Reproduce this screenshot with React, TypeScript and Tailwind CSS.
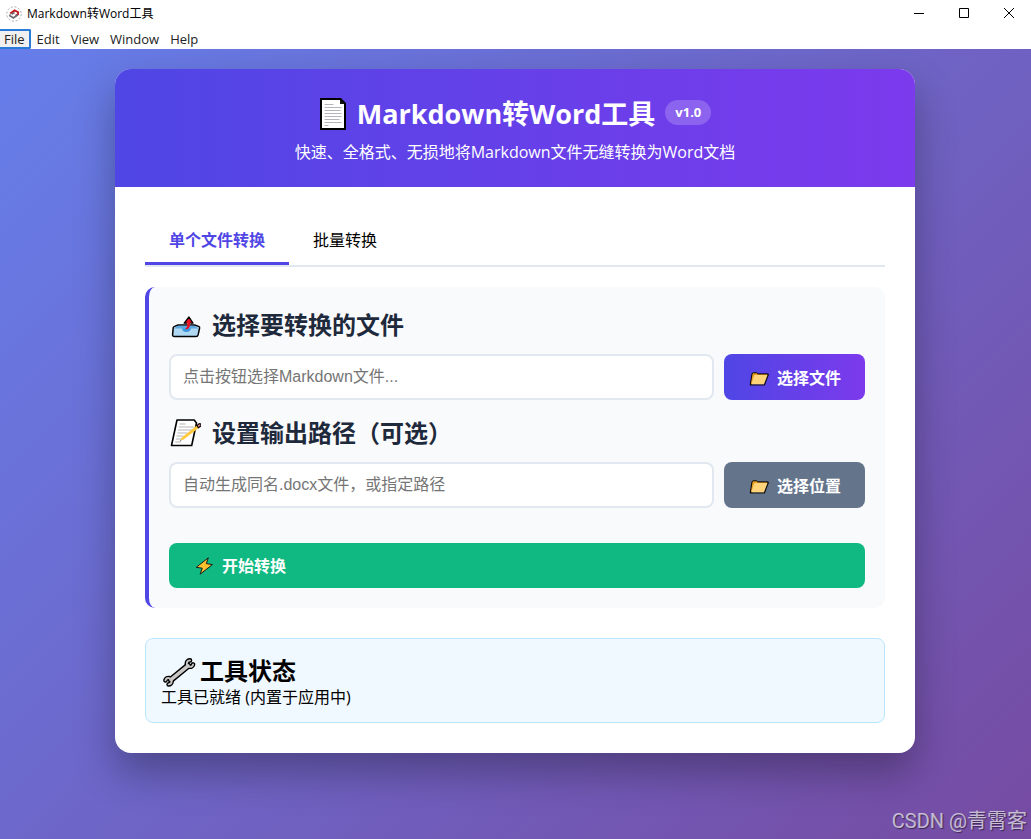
import { useState } from "react";
import type { ReactNode } from "react";

function AppLogo() {
  return (
    <svg className="size-4" viewBox="0 0 16 16" fill="none" aria-hidden="true">
      <circle cx="8" cy="8" r="7.2" stroke="#a8a8a8" strokeDasharray="2 1.8" />
      <path d="M4.2 7.6 8.6 4.4l3.6 1.8-.2 2.2-2.4 1.2" stroke="#c4161c" strokeWidth="1.8" />
      <path d="M4 8.6v1.2l3.4 2.2 4.4-3.2M5.6 8.2l3-1.8" stroke="#6b6b74" strokeWidth="1.7" />
    </svg>
  );
}

function PageIcon() {
  return (
    <svg className="h-8 w-7 shrink-0" viewBox="0 0 28 32" aria-hidden="true">
      <path d="M2 1h19.5L26 5.5V31H2z" fill="#fff" stroke="#000" strokeWidth="2" />
      <path d="m21 1 5 5h-5z" fill="#111" />
      <path d="M5.5 6.5h9M5.5 9.5h17M5.5 12.5h16M5.5 15.5h17M5.5 18.5h17M5.5 21.5h15M5.5 24.5h17M5.5 27.5h4" stroke="#b4b4ba" strokeWidth="1" />
    </svg>
  );
}

function OutboxIcon() {
  return (
    <svg className="size-8 shrink-0" viewBox="0 0 32 32" aria-hidden="true">
      <path d="M4.2 18.7q.3-.9 1.4-1.3L9 16h16.5l4.2 1.4q1.2.5.9 1.7l-1.5 6.8q-.4 1.6-2 1.6H5.4q-2 0-1.8-1.8z" fill="#b1d8f3" stroke="#000" strokeWidth="1.5" strokeLinejoin="round" />
      <path d="M5 19.4 9 16.8h16.2l4.6 2.6h-8q-1 3.4-4.8 3.4t-4.2-3.4z" fill="#5aa9e3" />
      <path d="M14 19.4h8q-1 3.4-4.6 3.4T14 19.4z" fill="#3a96dd" />
      <path d="M16.2 20q2.4-2 2.2-5.8h-3.2l4.8-6.2 4 6.2h-2.8q.2 4.4-3 6z" fill="#e81224" />
      <path d="M18 14.2h-2.8L20 8l4 6.2h-2.6" fill="none" stroke="#000" strokeWidth="1.3" strokeLinejoin="round" />
    </svg>
  );
}

function MemoIcon() {
  return (
    <svg className="size-8 shrink-0" viewBox="0 0 32 32" aria-hidden="true">
      <path d="M8 3h17.2l2.3 3-4.8 22.5H2.5z" fill="#fff" stroke="#000" strokeWidth="1.6" strokeLinejoin="round" />
      <path d="M10.5 7h6M9.7 10h15M9 13h14M8.3 16h10M7.5 19h7M6.9 22h6M6.2 25h6" stroke="#b5b5b5" strokeWidth="1.1" />
      <path d="m11.4 23.6 1.4-3.2L28.4 8l2 2.6-15.8 12z" fill="#ffc83d" />
      <path d="m27.8 8.6 1.9-1.6q1.4-.8 2.1.2.7 1.1-.3 2.1l-2.1 1.5z" fill="#d98484" stroke="#000" strokeWidth="1.1" />
      <path d="m10.8 24.2.8-1.5.8.9z" fill="#555" />
    </svg>
  );
}

function FolderIcon() {
  return (
    <svg className="h-5 w-[22px] shrink-0" viewBox="0 0 22 20" aria-hidden="true">
      <path d="M2.2 17 4 6q.2-1.2 1.4-1.2h3.2l1.2 1.1h10.4l-.5 2z" fill="#e8a023" stroke="#000" strokeWidth="1" strokeLinejoin="round" />
      <path d="M3.2 16.4 6.4 6.9h13.4L16 16.4z" fill="#ffd37a" />
      <path d="M2.2 17h14.2l4-10.6" fill="none" stroke="#111" strokeWidth="1.2" strokeLinejoin="round" />
    </svg>
  );
}

function BoltIcon() {
  return (
    <svg className="h-5 w-[22px] shrink-0" viewBox="0 0 22 20" aria-hidden="true">
      <path d="M15.3 1.8 3.3 11.3l6 .9-2.2 6L19.4 8.6l-6.1-1z" fill="#ffc22e" stroke="#1a1a1a" strokeWidth="1" strokeLinejoin="round" />
    </svg>
  );
}

function WrenchIcon() {
  const lowerHead = "M4.4 27.4a3.2 3.2 0 1 1 3.2 4";
  const upperHead = "M29 7.4a3.2 3.2 0 1 0 3.1 4";
  const shaft = "M10 26.7 27 12.8";
  return (
    <svg className="size-9 shrink-0" viewBox="0 0 36 36" fill="none" strokeLinecap="round" aria-hidden="true">
      <g stroke="#000" strokeWidth="4.6">
        <path d={lowerHead} />
        <path d={upperHead} />
        <path d={shaft} strokeWidth="6.4" />
      </g>
      <g stroke="#c9c6c6" strokeWidth="1.8">
        <path d={lowerHead} />
        <path d={upperHead} />
        <path d={shaft} strokeWidth="3.6" />
      </g>
    </svg>
  );
}

function WindowButton({ label, children }: { label: string; children: ReactNode }) {
  return (
    <button type="button" aria-label={label} className="flex h-[26px] w-[45px] items-center justify-center text-black">
      <svg className="size-3" viewBox="0 0 12 12" fill="none" stroke="currentColor" aria-hidden="true">
        {children}
      </svg>
    </button>
  );
}

const menus = ["File", "Edit", "View", "Window", "Help"];

function WindowChrome() {
  return (
    <header className="bg-white font-['Open_Sans','Noto_Sans_CJK_SC',sans-serif] text-black">
      <div className="flex h-7 items-start justify-between">
        <div className="flex h-7 items-center gap-[5px] pl-1.5 text-xs">
          <AppLogo />
          <span>Markdown转Word工具</span>
        </div>
        <div className="flex">
          <WindowButton label="Minimize">
            <path d="M1 6.5h10" />
          </WindowButton>
          <WindowButton label="Maximize">
            <path d="M1.5 1.5h9v9h-9z" />
          </WindowButton>
          <WindowButton label="Close">
            <path d="m1 1 10 10M11 1 1 11" />
          </WindowButton>
        </div>
      </div>
      <nav className="flex h-[21px] items-end gap-px text-[13px] text-[#222]">
        {menus.map((name) => (
          <button
            key={name}
            type="button"
            className={
              name === "File"
                ? "h-5 rounded-r-xs border-2 border-l-0 border-[#2a7bd8] bg-[#f0f0f0] px-1 leading-4"
                : "h-5 px-[5px] leading-5"
            }
          >
            {name}
          </button>
        ))}
      </nav>
    </header>
  );
}

interface FileFieldProps {
  id: string;
  title: string;
  icon: ReactNode;
  placeholder: string;
  button: string;
  buttonClass: string;
}

function FileField({ id, title, icon, placeholder, button, buttonClass }: FileFieldProps) {
  return (
    <div className="mb-[15px]">
      <h2 className="mb-[11px] text-2xl leading-9 font-bold text-[#1e293b]">
        <label htmlFor={id} className="flex items-center gap-[11px]">
          {icon}
          {title}
        </label>
      </h2>
      <div className="flex gap-2.5">
        <input
          id={id}
          readOnly
          placeholder={placeholder}
          className="h-[46px] min-w-0 flex-1 rounded-lg border-2 border-[#e2e8f0] bg-white px-3 font-['Liberation_Sans','Noto_Sans_CJK_SC',sans-serif] text-base placeholder:text-[#757575]"
        />
        <button
          type="button"
          className={`flex h-[46px] items-center gap-[7px] rounded-lg px-6 pt-0.5 text-base font-bold text-white ${buttonClass}`}
        >
          <FolderIcon />
          {button}
        </button>
      </div>
    </div>
  );
}

export default function App() {
  const [tab, setTab] = useState("single");
  const tabs = [
    { id: "single", label: "单个文件转换" },
    { id: "batch", label: "批量转换" },
  ];

  return (
    <div className="relative flex min-h-screen flex-col font-['Open_Sans','Noto_Sans_CJK_SC',sans-serif] text-black">
      <WindowChrome />
      <main className="flex-1 bg-linear-[135deg,#667eea_0%,#764ba2_100%] py-5 pr-[21px] pl-5">
        <div className="mx-auto max-w-[800px] overflow-hidden rounded-2xl bg-white shadow-[0_20px_40px_rgba(0,0,0,0.3)]">
          <div className="bg-linear-[90deg,#4f46e5,#7c3aed] px-5 pt-[25px] pb-[23px] text-center text-white">
            <h1 className="flex h-10 items-center justify-center gap-2.5 text-[27px] font-bold">
              <PageIcon />
              <span>Markdown转Word工具</span>
              <span className="mb-1 rounded-full bg-white/20 px-2.5 text-[13px] leading-[25px]">v1.0</span>
            </h1>
            <p className="mt-1.5 text-base leading-6">快速、全格式、无损地将Markdown文件无缝转换为Word文档</p>
          </div>

          <div className="p-[30px]">
            <div role="tablist" className="mb-5 flex border-b-2 border-[#e2e8f0]">
              {tabs.map(({ id, label }) => (
                <button
                  key={id}
                  type="button"
                  role="tab"
                  aria-selected={tab === id}
                  onClick={() => setTab(id)}
                  className={
                    tab === id
                      ? "h-12 border-b-3 border-[#4f46e5] px-6 text-base font-bold text-[#4f46e5]"
                      : "h-12 border-b-3 border-transparent px-6 text-base"
                  }
                >
                  {label}
                </button>
              ))}
            </div>

            <section className="mb-[30px] rounded-[10px] border-l-4 border-[#4f46e5] bg-[#f8fafc] p-5">
              <FileField
                id="source"
                title="选择要转换的文件"
                icon={<OutboxIcon />}
                placeholder="点击按钮选择Markdown文件..."
                button="选择文件"
                buttonClass="bg-linear-[90deg,#4f46e5,#7c3aed]"
              />
              <FileField
                id="target"
                title="设置输出路径（可选）"
                icon={<MemoIcon />}
                placeholder="自动生成同名.docx文件，或指定路径"
                button="选择位置"
                buttonClass="bg-[#64748b]"
              />
              <button
                type="button"
                className="mt-[35px] flex h-[45px] w-full items-center gap-[7px] rounded-lg bg-[#10b981] px-6 text-base font-bold text-white"
              >
                <BoltIcon />
                开始转换
              </button>
            </section>

            <section className="rounded-lg border border-[#bae6fd] bg-[#f0f9ff] px-[15px] pt-4 pb-3.5">
              <h2 className="flex h-8 items-center gap-[3px] text-2xl font-bold">
                <WrenchIcon />
                工具状态
              </h2>
              <p className="text-base leading-[21px]">工具已就绪 (内置于应用中)</p>
            </section>
          </div>
        </div>
      </main>
      <p className="absolute right-1 bottom-1 font-[Roboto,'Noto_Sans_CJK_SC',sans-serif] text-[20px] leading-7 text-white/65 [text-shadow:1px_1px_1px_rgba(0,0,0,0.5)]">
        CSDN @青霄客
      </p>
    </div>
  );
}
